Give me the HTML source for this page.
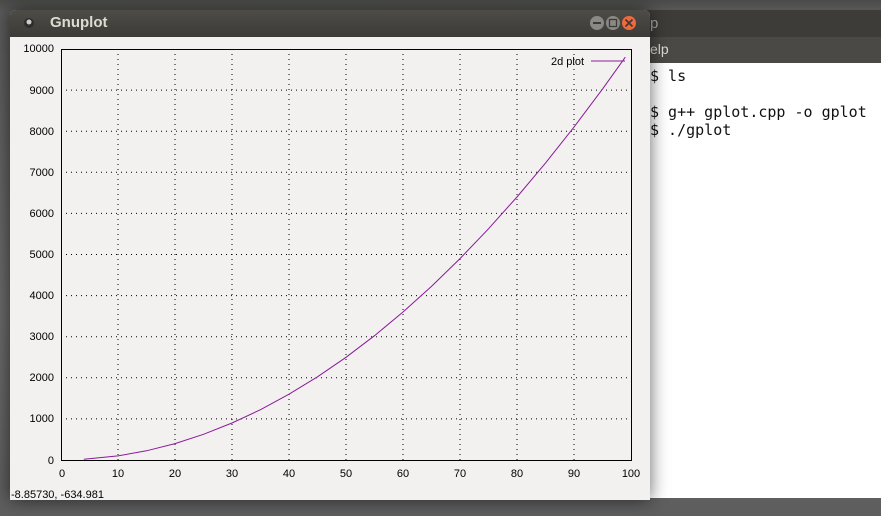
<!DOCTYPE html>
<html><head><meta charset="utf-8"><style>
body{margin:0;width:881px;height:516px;overflow:hidden;background:#5c5c5c;font-family:"Liberation Sans",sans-serif;position:relative}
.bg{position:absolute;left:0;top:0;width:881px;height:516px;background:linear-gradient(#4a4a48 0,#5a5a5a 12px,#6a6a6a 60%,#5e5e5e)}
.term{position:absolute;left:600px;top:10px;width:281px;height:488px;background:#fff}
.ttitle{position:absolute;left:0;top:0;width:281px;height:27px;background:#3d3c38;color:#aaa;font-size:15px}
.tmenu{position:absolute;left:0;top:27px;width:281px;height:26px;background:#4a4945;color:#ddd;font-size:14px}
.tcont{position:absolute;left:50px;top:57px;font-family:"DejaVu Sans Mono","Liberation Mono",monospace;font-size:15px;line-height:18px;color:#111;white-space:pre}
.win{position:absolute;left:10px;top:10px;width:640px;height:490px;background:#f2f1f0;box-shadow:0 0 18px rgba(0,0,0,.6);border-radius:6px 6px 0 0;overflow:hidden}
.title{position:absolute;left:0;top:0;width:640px;height:27px;background:linear-gradient(#4d4c47,#3c3b37);}
.title span{position:absolute;left:40px;top:4px;color:#dfdbd2;font-size:15px;font-weight:bold}
</style></head><body>
<div class="bg"></div>
<div class="term">
 <div class="ttitle"><span style="position:absolute;left:50px;top:5px">p</span></div>
 <div class="tmenu"><span style="position:absolute;left:50px;top:4px">elp</span></div>
 <div class="tcont">$ ls

$ g++ gplot.cpp -o gplot
$ ./gplot</div>
</div>
<div class="win">
 <div class="title"><span>Gnuplot</span>
  <svg width="640" height="27" style="position:absolute;left:0;top:0">
   <circle cx="19" cy="13" r="5" fill="#2e2d2a"/><circle cx="19" cy="12" r="2.5" fill="#ccc"/>
   <circle cx="587" cy="13" r="7" fill="#8a8984"/><rect x="583" y="12" width="8" height="2" fill="#3c3b37"/>
   <circle cx="603" cy="13" r="7" fill="#8a8984"/><rect x="599.5" y="9.5" width="7" height="7" fill="none" stroke="#3c3b37" stroke-width="1.3"/>
   <circle cx="619" cy="13" r="7" fill="#f0693a"/><path d="M615.5 9.5l7 7M622.5 9.5l-7 7" stroke="#3c3b37" stroke-width="1.8"/>
  </svg>
 </div>
</div>
<svg width="881" height="516" style="position:absolute;left:0;top:0" font-family="Liberation Sans, sans-serif" font-size="11" fill="#000">
 <g stroke="#000" stroke-width="1" stroke-dasharray="1,4">
  <path d="M118 49V460M175 49V460M232 49V460M289 49V460M346 49V460M403 49V460M460 49V460M517 49V460M574 49V460"/>
  <path d="M61 90.1H631M61 131.2H631M61 172.3H631M61 213.4H631M61 254.5H631M61 295.6H631M61 336.7H631M61 377.8H631M61 418.9H631"/>
 </g>
 <rect x="61.5" y="49.5" width="570" height="411" fill="none" stroke="#000"/>
 <g text-anchor="end">
  <text x="54" y="52">10000</text><text x="54" y="94">9000</text><text x="54" y="135">8000</text><text x="54" y="176">7000</text><text x="54" y="217">6000</text><text x="54" y="258">5000</text><text x="54" y="299">4000</text><text x="54" y="340">3000</text><text x="54" y="381">2000</text><text x="54" y="422">1000</text><text x="54" y="464">0</text>
 </g>
 <g text-anchor="middle">
  <text x="62" y="477">0</text><text x="118" y="477">10</text><text x="175" y="477">20</text><text x="232" y="477">30</text><text x="289" y="477">40</text><text x="346" y="477">50</text><text x="403" y="477">60</text><text x="460" y="477">70</text><text x="517" y="477">80</text><text x="574" y="477">90</text><text x="631" y="477">100</text>
 </g>
 <text x="11" y="498">-8.85730, -634.981</text>
 <text x="584" y="65" text-anchor="end">2d plot</text>
 <path d="M591 61H625" stroke="#8a1a9a" stroke-width="1"/>
 <polyline fill="none" stroke="#8a1a9a" stroke-width="1" points="83.8,459.3 118,455.9 146.5,450.8 175,443.6 203.5,434.3 232,423 260.5,409.7 289,394.2 317.5,376.8 346,357.3 374.5,335.7 403,312 431.5,286.4 460,258.6 488.5,228.8 517,197 545.5,163.1 574,127.1 602.5,89.1 625.3,57.2"/>
</svg>
</body></html>
